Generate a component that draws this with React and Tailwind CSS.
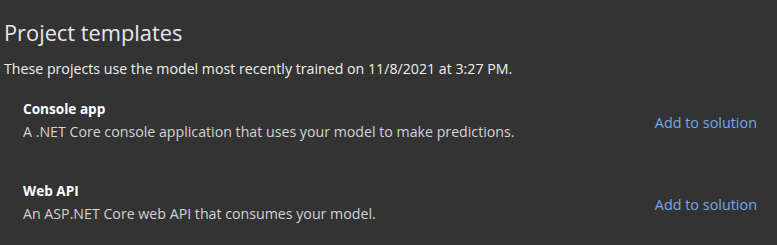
const templates = [
  {
    name: "Console app",
    description: "A .NET Core console application that uses your model to make predictions.",
  },
  {
    name: "Web API",
    description: "An ASP.NET Core web API that consumes your model.",
  },
];

export default function App() {
  return (
    <div
      className="w-[777px] h-[245px] bg-[#333333] text-[#f0f0f0] overflow-hidden"
      style={{ fontFamily: '"Open Sans", "Noto Sans", sans-serif' }}
    >
      <div className="pl-[4px] pt-[19px]">
        <h1 className="text-[21.8px] leading-[28px] text-[#e8e8e8]">Project templates</h1>
        <p className="mt-[13px] text-[14.2px] leading-[18px] text-[#f0f0f0]">
          These projects use the model most recently trained on 11/8/2021 at 3:27 PM.
        </p>
      </div>

      <div className="mt-[22px] flex flex-col gap-[41px]">
        {templates.map((t) => (
          <div key={t.name} className="flex items-center pl-[23px] pr-[20px]">
            <div className="flex-1">
              <h3 className="text-[13.6px] leading-[18px] font-bold text-white">{t.name}</h3>
              <p className="mt-[5px] text-[14.2px] leading-[18px] text-[#d4d4d4]">{t.description}</p>
            </div>
            <button className="mt-[4px] text-[14.4px] leading-[18px] text-[#74a9e6]">Add to solution</button>
          </div>
        ))}
      </div>
    </div>
  );
}
